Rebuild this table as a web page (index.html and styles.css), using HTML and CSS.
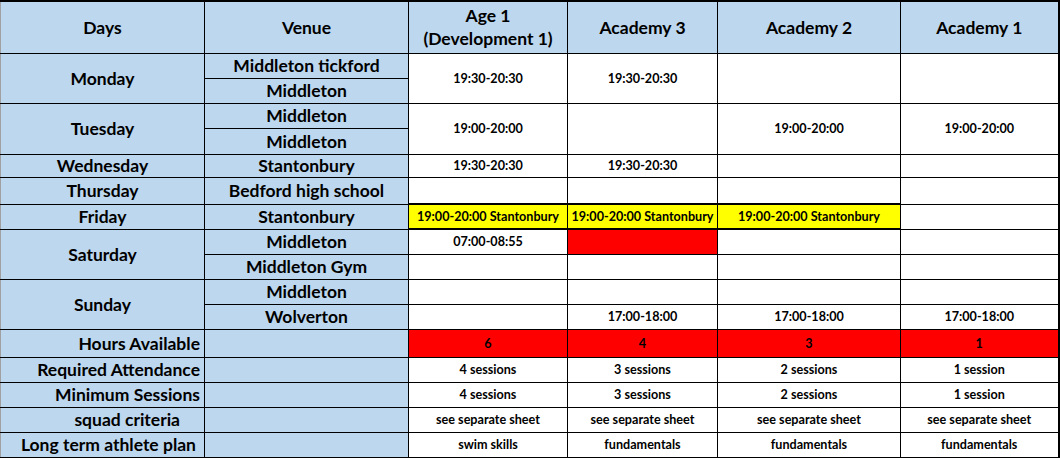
FILE: index.html
```html
<!DOCTYPE html>
<html lang="en">
<head>
<meta charset="utf-8">
<title>Squad timetable</title>
<link rel="stylesheet" href="styles.css">
</head>
<body>
<table class="sheet">
  <colgroup>
    <col class="c-day"><col class="c-venue"><col class="c-age"><col class="c-a3"><col class="c-a2"><col class="c-a1">
  </colgroup>
  <thead>
    <tr class="r-head">
      <th>Days</th>
      <th>Venue</th>
      <th class="two-line">Age 1<br>(Development 1)</th>
      <th>Academy 3</th>
      <th>Academy 2</th>
      <th>Academy 1</th>
    </tr>
  </thead>
  <tbody>
    <tr class="r25">
      <th rowspan="2" class="day">Monday</th>
      <th class="venue box box-top">Middleton tickford</th>
      <td rowspan="2">19:30-20:30</td>
      <td rowspan="2">19:30-20:30</td>
      <td rowspan="2"></td>
      <td rowspan="2"></td>
    </tr>
    <tr class="r25">
      <th class="venue box box-bottom">Middleton</th>
    </tr>
    <tr class="r25">
      <th rowspan="2" class="day">Tuesday</th>
      <th class="venue">Middleton</th>
      <td rowspan="2">19:00-20:00</td>
      <td rowspan="2"></td>
      <td rowspan="2">19:00-20:00</td>
      <td rowspan="2">19:00-20:00</td>
    </tr>
    <tr class="r26">
      <th class="venue">Middleton</th>
    </tr>
    <tr class="r23">
      <th class="day">Wednesday</th>
      <th class="venue">Stantonbury</th>
      <td>19:30-20:30</td>
      <td>19:30-20:30</td>
      <td></td>
      <td></td>
    </tr>
    <tr class="r27">
      <th class="day">Thursday</th>
      <th class="venue">Bedford high school</th>
      <td></td><td></td><td></td><td></td>
    </tr>
    <tr class="r25">
      <th class="day">Friday</th>
      <th class="venue">Stantonbury</th>
      <td class="yellow">19:00-20:00 Stantonbury</td>
      <td class="yellow">19:00-20:00 Stantonbury</td>
      <td class="yellow">19:00-20:00 Stantonbury</td>
      <td></td>
    </tr>
    <tr class="r25">
      <th rowspan="2" class="day">Saturday</th>
      <th class="venue">Middleton</th>
      <td>07:00-08:55</td>
      <td class="red"></td>
      <td></td>
      <td></td>
    </tr>
    <tr class="r25">
      <th class="venue">Middleton Gym</th>
      <td></td><td></td><td></td><td></td>
    </tr>
    <tr class="r25">
      <th rowspan="2" class="day">Sunday</th>
      <th class="venue">Middleton</th>
      <td></td><td></td><td></td><td></td>
    </tr>
    <tr class="r25">
      <th class="venue">Wolverton</th>
      <td></td>
      <td>17:00-18:00</td>
      <td>17:00-18:00</td>
      <td>17:00-18:00</td>
    </tr>
    <tr class="r28 hours">
      <th class="label">Hours Available</th>
      <th class="venue"></th>
      <td class="red">6</td>
      <td class="red">4</td>
      <td class="red">3</td>
      <td class="red">1</td>
    </tr>
    <tr class="r25">
      <th class="label">Required Attendance</th>
      <th class="venue"></th>
      <td>4 sessions</td>
      <td>3 sessions</td>
      <td>2 sessions</td>
      <td>1 session</td>
    </tr>
    <tr class="r25">
      <th class="label">Minimum Sessions</th>
      <th class="venue"></th>
      <td>4 sessions</td>
      <td>3 sessions</td>
      <td>2 sessions</td>
      <td>1 session</td>
    </tr>
    <tr class="r25">
      <th class="label label-indent">squad criteria</th>
      <th class="venue"></th>
      <td>see separate sheet</td>
      <td>see separate sheet</td>
      <td>see separate sheet</td>
      <td>see separate sheet</td>
    </tr>
    <tr class="r25">
      <th class="label label-long">Long term athlete plan</th>
      <th class="venue"></th>
      <td>swim skills</td>
      <td>fundamentals</td>
      <td>fundamentals</td>
      <td>fundamentals</td>
    </tr>
  </tbody>
</table>
</body>
</html>
```

FILE: styles.css
```css
html, body {
  margin: 0;
  padding: 0;
  background: #ffffff;
}

.sheet {
  border-collapse: collapse;
  table-layout: fixed;
  width: 1058px;
  font-family: Lato, "Liberation Sans", sans-serif;
  color: #000;
  border-left: 1px solid #a0a0a0;
  border-right: 2px solid #000;
}

.c-day { width: 204px; }
.c-venue { width: 204px; }
.c-age { width: 159px; }
.c-a3 { width: 150px; }
.c-a2 { width: 183px; }
.c-a1 { width: 158px; }

.sheet th,
.sheet td {
  border: 1px solid #000;
  padding: 0;
  text-align: center;
  vertical-align: middle;
  white-space: nowrap;
  overflow: hidden;
}

.sheet th {
  background: #bdd7ee;
  font-weight: 700;
  font-size: 17.5px;
}

.sheet td {
  background: #fff;
  font-weight: 700;
  font-size: 12.6px;
}

.sheet th.day,
.sheet th.label,
.r-head th:first-child {
  border-left: 1px solid #a0a0a0;
}

.r-head { height: 52px; }
.r-head th { border-top: 2px solid #000; }
.r-head .two-line { line-height: 23px; }

.r23 { height: 23px; }
.r25 { height: 25px; }
.r26 { height: 26px; }
.r27 { height: 27px; }
.r28 { height: 28px; }

.box { border-left: 2px solid #000; border-right: 2px solid #000; }
.box-top { border-top: 2px solid #000; }
.box-bottom { border-bottom: 2px solid #000; }

.sheet td.yellow {
  background: #ffff00;
  border-top: 2px solid #000;
  border-bottom: 2px solid #000;
}

.sheet td.red {
  background: #ff0000;
}

.sheet th.label {
  text-align: right;
  padding-right: 4px;
}

.sheet th.label-indent { padding-right: 24px; }
.sheet th.label-long { padding-right: 8px; }
```
